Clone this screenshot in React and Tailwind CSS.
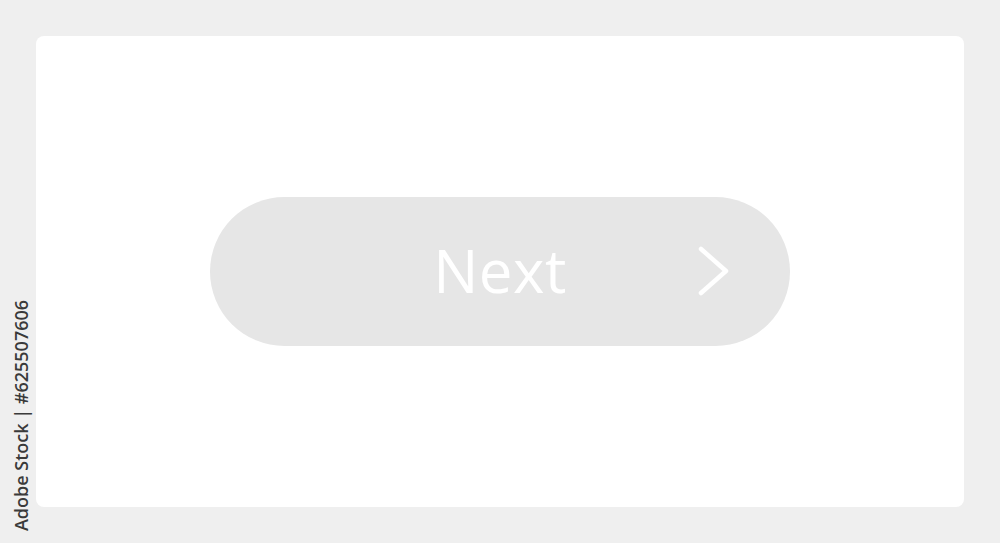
import React from "react";

function ChevronRight({ className }) {
  return (
    <svg viewBox="0 0 34 52" className={className} fill="none">
      <path
        d="M4 4 L29 26 L4 48"
        stroke="currentColor"
        strokeWidth="4.5"
        strokeLinecap="round"
        strokeLinejoin="round"
      />
    </svg>
  );
}

export default function App() {
  return (
    <div className="relative w-full h-[543px] bg-[#efefef] p-[36px] font-['Open_Sans',sans-serif]">
      {/* card */}
      <div className="w-full h-full bg-white rounded-[8px] flex items-center justify-center">
        <button className="relative w-[580px] h-[149px] rounded-full bg-[#e6e6e6] flex items-center justify-center text-white">
          <span className="text-[60px] font-medium leading-none tracking-[0.5px] pb-[4px]">Next</span>
          <ChevronRight className="absolute right-[59px] top-[48px] w-[34px] h-[52px]" />
        </button>
      </div>

      {/* side label */}
      <div className="absolute left-[10px] bottom-[10px] w-[24px] h-[236px] flex items-center justify-center">
        <span className="-rotate-90 whitespace-nowrap text-[18px] font-semibold text-[#3a3a3a]">
          Adobe Stock | #625507606
        </span>
      </div>
    </div>
  );
}
